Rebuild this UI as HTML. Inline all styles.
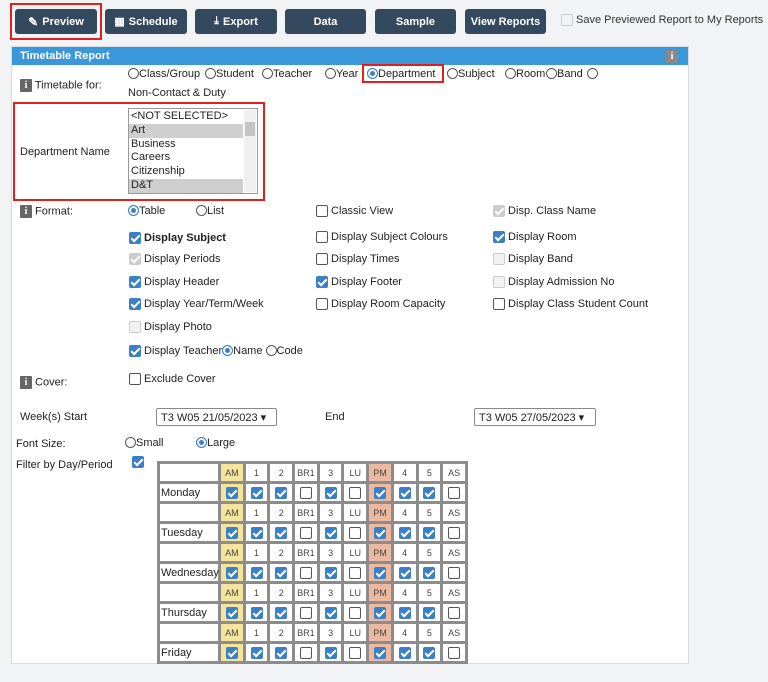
<!DOCTYPE html>
<html><head><meta charset="utf-8"><style>
*{box-sizing:border-box;margin:0;padding:0}
body{width:768px;height:682px;background:#f2f3f5;font-family:"Liberation Sans",sans-serif;font-size:11px;color:#222;position:relative;overflow:hidden}
.a{position:absolute;white-space:nowrap}
.btn{position:absolute;top:9px;height:25px;background:#34495e;color:#fff;font-weight:bold;font-size:11px;border-radius:3px;display:flex;align-items:center;justify-content:center;gap:4px}
.panel{position:absolute;left:11px;top:46px;width:678px;height:618px;background:#fff;border:1px solid #d8dce0}
.hdr{position:absolute;left:0;top:0;width:100%;height:18px;background:#3a97d9;color:#fff;font-weight:bold;padding:3px 8px;font-size:11px}
.info{display:inline-block;width:12px;height:13px;background:#666;color:#fff;font-size:10px;font-weight:bold;text-align:center;line-height:13px;border-radius:1px;vertical-align:middle;font-family:"Liberation Serif",serif}
.cb{display:inline-block;width:12px;height:12px;border:1px solid #555;border-radius:2px;background:#fff;vertical-align:middle;position:relative}
.cb.on{background:#3b7fc6;border-color:#3b7fc6}
.cb.on::after{content:"";position:absolute;left:3px;top:0px;width:3px;height:7px;border:solid #fff;border-width:0 2px 2px 0;transform:rotate(45deg)}
.cb.dis{border-color:#ccc;background:#f2f2f2}
.cb.dis.on{background:#ccc;border-color:#ccc}
.rd{display:inline-block;width:11px;height:11px;border:1px solid #555;border-radius:50%;background:#fff;vertical-align:middle;position:relative;top:-1px}
.rd.on{border-color:#3b7fc6;box-shadow:inset 0 0 0 2px #fff;background:#3b7fc6}
.red{position:absolute;border:2px solid #e0201e}
.sel{position:absolute;height:18px;border:1px solid #888;border-radius:2px;background:#fff;padding:2px 4px;font-size:11px}
table.g{position:absolute;left:157px;top:461px;border-spacing:3px;background:#8c8c8c;border-collapse:separate;width:311px;table-layout:fixed}
table.g td{background:#fff;height:17px;text-align:center;font-size:9px;color:#444;padding:0;overflow:hidden}
table.g td.d{text-align:left;font-size:11px;color:#222;padding-left:1px;white-space:nowrap;overflow:visible}
table.g td.am{background:#f5e49b}
table.g td.pm{background:#ecb8a0}
table.g .cb{width:12px;height:12px}
</style></head><body>
<div class="red" style="left:10px;top:3px;width:92px;height:37px"></div>
<div class="btn" style="left:15px;width:82px"><span style="font-size:12px">✎</span>Preview</div>
<div class="btn" style="left:105px;width:82px"><span style="font-size:11px">▦</span>Schedule</div>
<div class="btn" style="left:195px;width:82px"><span>⤓</span>Export</div>
<div class="btn" style="left:285px;width:81px">Data</div>
<div class="btn" style="left:375px;width:81px">Sample</div>
<div class="btn" style="left:465px;width:81px">View Reports</div>
<div class="a" style="left:561px;top:14px;color:#333"><span class="cb dis"></span> Save Previewed Report to My Reports</div>

<div class="panel">
<div class="hdr">Timetable Report<span class="info" style="position:absolute;right:10px;top:3px;background:#888">i</span></div>
</div>
<div class="a" style="left:128px;top:68px"><span class="rd"></span>Class/Group</div>
<div class="a" style="left:205px;top:68px"><span class="rd"></span>Student</div>
<div class="a" style="left:262px;top:68px"><span class="rd"></span>Teacher</div>
<div class="a" style="left:325px;top:68px"><span class="rd"></span>Year</div>
<div class="a" style="left:367px;top:68px"><span class="rd on"></span>Department</div>
<div class="a" style="left:447px;top:68px"><span class="rd"></span>Subject</div>
<div class="a" style="left:505px;top:68px"><span class="rd"></span>Room</div>
<div class="a" style="left:546px;top:68px"><span class="rd"></span>Band</div>
<div class="a" style="left:587px;top:68px"><span class="rd"></span></div>
<div class="red" style="left:362px;top:64px;width:82px;height:19px"></div>
<div class="a" style="left:20px;top:79px"><span class="info">i</span> Timetable for:</div>
<div class="a" style="left:128px;top:87px">Non-Contact &amp; Duty</div>

<div class="red" style="left:13px;top:102px;width:252px;height:99px"></div>
<div class="a" style="left:20px;top:146px">Department Name</div>
<div class="a" style="left:128px;top:108px;width:130px;height:86px;border:1px solid #999;background:#fff;font-size:11px;line-height:13.8px;padding-top:1px">
<div style="padding-left:2px">&lt;NOT SELECTED&gt;</div>
<div style="padding-left:2px;background:#cfcfcf;width:114px">Art</div>
<div style="padding-left:2px">Business</div>
<div style="padding-left:2px">Careers</div>
<div style="padding-left:2px">Citizenship</div>
<div style="padding-left:2px;background:#cfcfcf;width:114px">D&amp;T</div>
<div style="position:absolute;right:1px;top:1px;width:12px;height:82px;background:#f0f0f0"><div style="margin:12px 1px;height:14px;background:#c4c4c4"></div></div>
</div>

<div class="a" style="left:20px;top:205px"><span class="info">i</span> Format:</div>
<div class="a" style="left:128px;top:205px"><span class="rd on"></span>Table</div>
<div class="a" style="left:196px;top:205px"><span class="rd"></span>List</div>
<div class="a" style="left:316px;top:205px"><span class="cb"></span> Classic View</div>
<div class="a" style="left:493px;top:205px"><span class="cb dis on"></span> Disp. Class Name</div>

<div class="a" style="left:129px;top:232px;font-weight:bold"><span class="cb on"></span> Display Subject</div>
<div class="a" style="left:316px;top:231px"><span class="cb"></span> Display Subject Colours</div>
<div class="a" style="left:493px;top:231px"><span class="cb on"></span> Display Room</div>

<div class="a" style="left:129px;top:253px"><span class="cb dis on"></span> Display Periods</div>
<div class="a" style="left:316px;top:253px"><span class="cb"></span> Display Times</div>
<div class="a" style="left:493px;top:253px"><span class="cb dis"></span> Display Band</div>

<div class="a" style="left:129px;top:276px"><span class="cb on"></span> Display Header</div>
<div class="a" style="left:316px;top:276px"><span class="cb on"></span> Display Footer</div>
<div class="a" style="left:493px;top:276px"><span class="cb dis"></span> Display Admission No</div>

<div class="a" style="left:129px;top:298px"><span class="cb on"></span> Display Year/Term/Week</div>
<div class="a" style="left:316px;top:298px"><span class="cb"></span> Display Room Capacity</div>
<div class="a" style="left:493px;top:298px"><span class="cb"></span> Display Class Student Count</div>

<div class="a" style="left:129px;top:321px"><span class="cb dis"></span> Display Photo</div>
<div class="a" style="left:129px;top:345px"><span class="cb on"></span> Display Teacher<span class="rd on"></span>Name <span class="rd"></span>Code</div>

<div class="a" style="left:20px;top:376px"><span class="info">i</span> Cover:</div>
<div class="a" style="left:129px;top:373px"><span class="cb"></span> Exclude Cover</div>

<div class="a" style="left:20px;top:411px">Week(s) Start</div>
<div class="sel" style="left:156px;top:408px;width:121px">T3 W05 21/05/2023 ▾</div>
<div class="a" style="left:325px;top:411px">End</div>
<div class="sel" style="left:474px;top:408px;width:122px">T3 W05 27/05/2023 ▾</div>

<div class="a" style="left:16px;top:438px">Font Size:</div>
<div class="a" style="left:125px;top:437px"><span class="rd"></span>Small</div>
<div class="a" style="left:196px;top:437px"><span class="rd on"></span>Large</div>
<div class="a" style="left:16px;top:459px">Filter by Day/Period</div>
<div class="a" style="left:132px;top:456px"><span class="cb on"></span></div>

<table class="g">
<colgroup><col style="width:58px"><col span="10"></colgroup>
<tr><td class="d"></td><td class="am">AM</td><td>1</td><td>2</td><td>BR1</td><td>3</td><td>LU</td><td class="pm">PM</td><td>4</td><td>5</td><td>AS</td></tr>
<tr><td class="d">Monday</td><td class="am"><span class="cb on"></span></td><td><span class="cb on"></span></td><td><span class="cb on"></span></td><td><span class="cb"></span></td><td><span class="cb on"></span></td><td><span class="cb"></span></td><td class="pm"><span class="cb on"></span></td><td><span class="cb on"></span></td><td><span class="cb on"></span></td><td><span class="cb"></span></td></tr>
<tr><td class="d"></td><td class="am">AM</td><td>1</td><td>2</td><td>BR1</td><td>3</td><td>LU</td><td class="pm">PM</td><td>4</td><td>5</td><td>AS</td></tr>
<tr><td class="d">Tuesday</td><td class="am"><span class="cb on"></span></td><td><span class="cb on"></span></td><td><span class="cb on"></span></td><td><span class="cb"></span></td><td><span class="cb on"></span></td><td><span class="cb"></span></td><td class="pm"><span class="cb on"></span></td><td><span class="cb on"></span></td><td><span class="cb on"></span></td><td><span class="cb"></span></td></tr>
<tr><td class="d"></td><td class="am">AM</td><td>1</td><td>2</td><td>BR1</td><td>3</td><td>LU</td><td class="pm">PM</td><td>4</td><td>5</td><td>AS</td></tr>
<tr><td class="d">Wednesday</td><td class="am"><span class="cb on"></span></td><td><span class="cb on"></span></td><td><span class="cb on"></span></td><td><span class="cb"></span></td><td><span class="cb on"></span></td><td><span class="cb"></span></td><td class="pm"><span class="cb on"></span></td><td><span class="cb on"></span></td><td><span class="cb on"></span></td><td><span class="cb"></span></td></tr>
<tr><td class="d"></td><td class="am">AM</td><td>1</td><td>2</td><td>BR1</td><td>3</td><td>LU</td><td class="pm">PM</td><td>4</td><td>5</td><td>AS</td></tr>
<tr><td class="d">Thursday</td><td class="am"><span class="cb on"></span></td><td><span class="cb on"></span></td><td><span class="cb on"></span></td><td><span class="cb"></span></td><td><span class="cb on"></span></td><td><span class="cb"></span></td><td class="pm"><span class="cb on"></span></td><td><span class="cb on"></span></td><td><span class="cb on"></span></td><td><span class="cb"></span></td></tr>
<tr><td class="d"></td><td class="am">AM</td><td>1</td><td>2</td><td>BR1</td><td>3</td><td>LU</td><td class="pm">PM</td><td>4</td><td>5</td><td>AS</td></tr>
<tr><td class="d">Friday</td><td class="am"><span class="cb on"></span></td><td><span class="cb on"></span></td><td><span class="cb on"></span></td><td><span class="cb"></span></td><td><span class="cb on"></span></td><td><span class="cb"></span></td><td class="pm"><span class="cb on"></span></td><td><span class="cb on"></span></td><td><span class="cb on"></span></td><td><span class="cb"></span></td></tr>
</table>
</body></html>
